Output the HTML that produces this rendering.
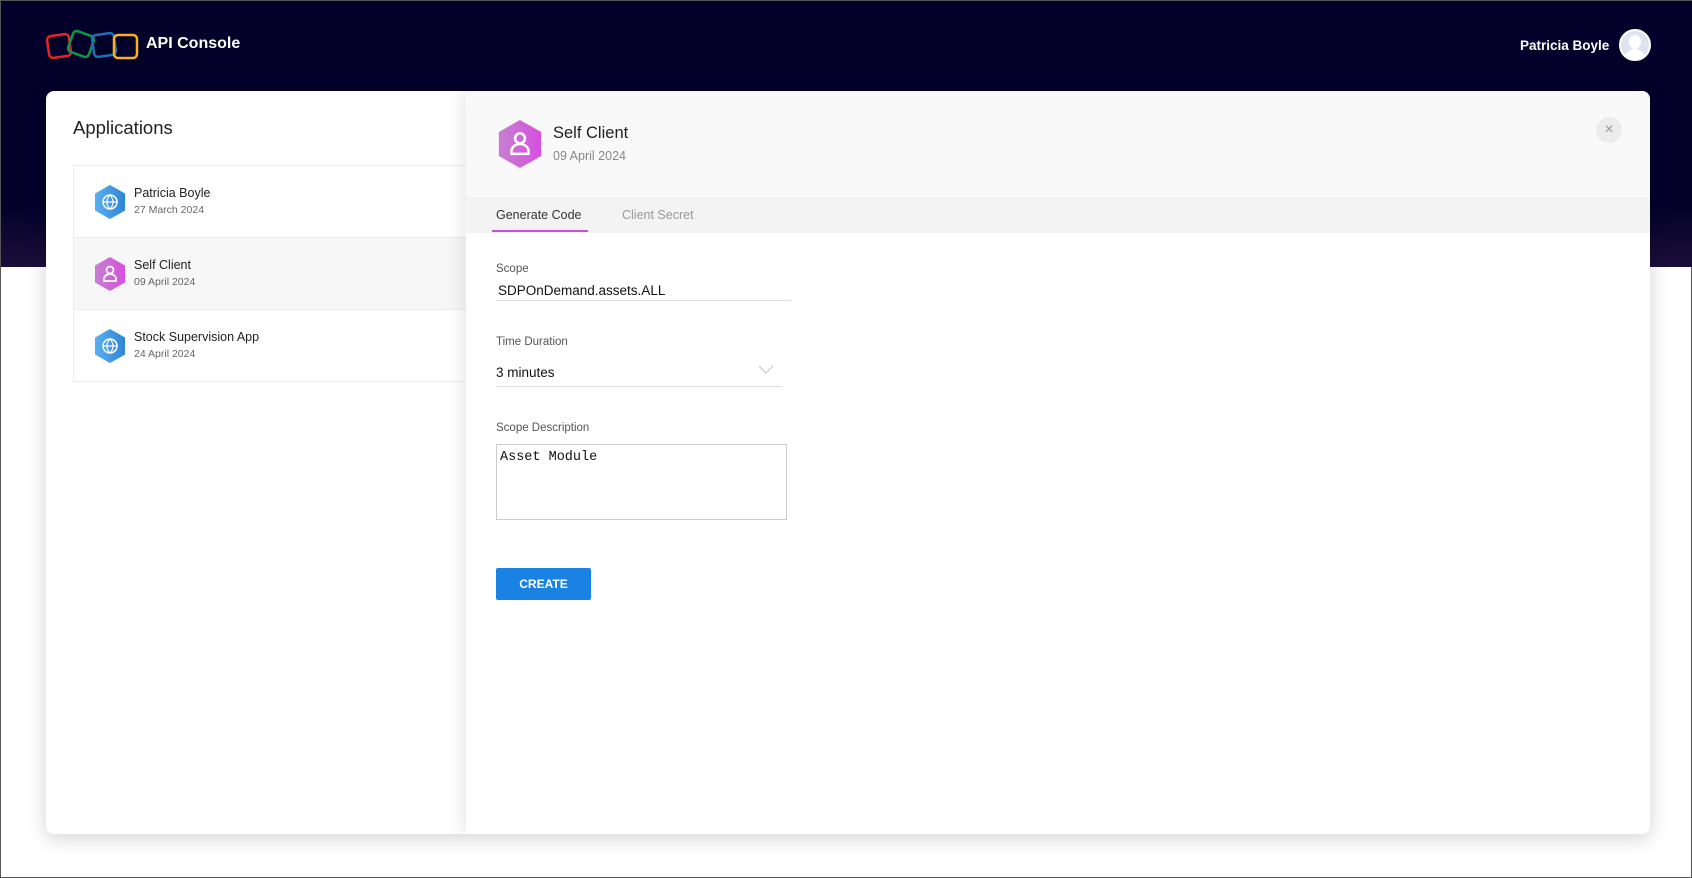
<!DOCTYPE html>
<html><head><meta charset="utf-8"><style>
*{box-sizing:border-box;margin:0;padding:0}
body{width:1692px;height:878px;background:#fff;font-family:"Liberation Sans",sans-serif;position:relative;overflow:hidden;border:1px solid #555}
.top{position:absolute;left:0;top:0;width:1692px;height:266px;background:linear-gradient(#03002a 0,#03002a 200px,#1a0f3a 266px)}
.card{position:absolute;left:45px;top:90px;width:1604px;height:743px;background:#fff;border-radius:8px;box-shadow:0 4px 20px rgba(0,0,0,.18);overflow:hidden}
.right{position:absolute;left:420px;top:0;right:0;bottom:0;background:#fff;box-shadow:-6px 0 16px rgba(0,0,0,.08)}
.abs{position:absolute}
.row{position:absolute;left:27px;width:400px;height:73px;border:1px solid #ececec;background:#fff}
.row .n{position:absolute;left:60px;top:20px;font-size:12.5px;color:#222}
.row .d{position:absolute;left:60px;top:38px;font-size:10.5px;color:#666}
.row svg{position:absolute;left:19px;top:18px}
.lbl{font-size:11.5px;color:#555}
</style></head><body>
<div class="top"></div>
<svg class="abs" style="left:44px;top:28px" width="96" height="34" viewBox="0 0 96 34">
<rect x="3" y="6" width="22" height="22" rx="4" fill="none" stroke="#e42527" stroke-width="2.5" transform="rotate(-8 14 17)"/>
<rect x="25" y="4" width="22" height="22" rx="4" fill="none" stroke="#089949" stroke-width="2.5" transform="rotate(20 36 15)"/>
<rect x="48" y="5" width="22" height="22" rx="4" fill="none" stroke="#226db4" stroke-width="2.5" transform="rotate(-8 59 16)"/>
<rect x="69" y="6" width="23" height="23" rx="4" fill="none" stroke="#f9b21d" stroke-width="2.5"/>
</svg>
<div class="abs" style="left:145px;top:34px;color:#fff;font-weight:bold;font-size:16px">API Console</div>
<div class="abs" style="left:1519px;top:37px;color:#fff;font-weight:bold;font-size:13.5px">Patricia Boyle</div>
<div class="abs" style="left:1618px;top:28px;width:32px;height:32px;border-radius:50%;background:#dfe3ee;border:2px solid #fff;overflow:hidden"><div style="position:absolute;left:8px;top:4px;width:12px;height:14px;border-radius:50%;background:#fff"></div><div style="position:absolute;left:4px;top:18px;width:20px;height:14px;border-radius:10px 10px 0 0;background:#fff"></div></div>
<div class="card">
<div class="abs" style="left:27px;top:26px;font-size:18.5px;color:#222">Applications</div>
<div class="row" style="top:74px"><svg width="34" height="36" viewBox="0 0 34 36"><defs><linearGradient id="b" x1="0" x2="1"><stop offset="0" stop-color="#5aaef0"/><stop offset="1" stop-color="#2f86d8"/></linearGradient></defs><polygon points="17,1 32,9.5 32,26.5 17,35 2,26.5 2,9.5" fill="url(#b)"/><circle cx="17" cy="18" r="7" fill="none" stroke="#fff" stroke-width="1.5"/><path d="M10 18h14M17 11c-4 4-4 10 0 14M17 11c4 4 4 10 0 14" fill="none" stroke="#fff" stroke-width="1.2"/></svg><div class="n">Patricia Boyle</div><div class="d">27 March 2024</div></div>
<div class="row" style="top:146px;background:#f7f7f7"><svg width="34" height="36" viewBox="0 0 34 36"><defs><linearGradient id="p" x1="0" x2="1"><stop offset="0" stop-color="#c77fd0"/><stop offset="1" stop-color="#d750e0"/></linearGradient></defs><polygon points="17,1 32,9.5 32,26.5 17,35 2,26.5 2,9.5" fill="url(#p)"/><circle cx="17" cy="14" r="3.5" fill="none" stroke="#fff" stroke-width="1.8"/><path d="M11 25v-2a6 5 0 0 1 12 0v2z" fill="none" stroke="#fff" stroke-width="1.8"/></svg><div class="n">Self Client</div><div class="d">09 April 2024</div></div>
<div class="row" style="top:218px"><svg width="34" height="36" viewBox="0 0 34 36"><polygon points="17,1 32,9.5 32,26.5 17,35 2,26.5 2,9.5" fill="url(#b)"/><circle cx="17" cy="18" r="7" fill="none" stroke="#fff" stroke-width="1.5"/><path d="M10 18h14M17 11c-4 4-4 10 0 14M17 11c4 4 4 10 0 14" fill="none" stroke="#fff" stroke-width="1.2"/></svg><div class="n">Stock Supervision App</div><div class="d">24 April 2024</div></div>
<div class="right">
<div class="abs" style="left:0;top:0;right:0;height:106px;background:#f9f9f9"></div>
<div class="abs" style="left:0;top:106px;right:0;height:36px;background:#f3f3f3"></div>
<svg class="abs" style="left:30px;top:27px" width="48" height="52" viewBox="0 0 34 36"><polygon points="17,1 32,9.5 32,26.5 17,35 2,26.5 2,9.5" fill="url(#p)"/><circle cx="17" cy="14" r="3.5" fill="none" stroke="#fff" stroke-width="1.8"/><path d="M11 25v-2a6 5 0 0 1 12 0v2z" fill="none" stroke="#fff" stroke-width="1.8"/></svg>
<div class="abs" style="left:87px;top:33px;font-size:16.5px;color:#222">Self Client</div>
<div class="abs" style="left:87px;top:58px;font-size:12.5px;color:#888">09 April 2024</div>
<div class="abs" style="left:1130px;top:26px;width:26px;height:26px;border-radius:50%;background:#ececec;color:#999;text-align:center;line-height:26px;font-size:16px">×</div>
<div class="abs" style="left:30px;top:117px;font-size:12.5px;color:#333">Generate Code</div>
<div class="abs" style="left:26px;top:139px;width:96px;height:2px;background:#c552d6"></div>
<div class="abs" style="left:156px;top:117px;font-size:12.5px;color:#999">Client Secret</div>
<div class="abs lbl" style="left:30px;top:172px">Scope</div>
<div class="abs" style="left:32px;top:192px;font-size:13.5px;color:#111">SDPOnDemand.assets.ALL</div>
<div class="abs" style="left:30px;top:209px;width:295px;height:1px;background:#ddd"></div>
<div class="abs lbl" style="left:30px;top:245px">Time Duration</div>
<div class="abs" style="left:30px;top:274px;font-size:13.5px;color:#111">3 minutes</div>
<svg class="abs" style="left:292px;top:274px" width="16" height="10"><path d="M1 1l7 7 7-7" fill="none" stroke="#ccc" stroke-width="1.2"/></svg>
<div class="abs" style="left:30px;top:295px;width:286px;height:1px;background:#ddd"></div>
<div class="abs lbl" style="left:30px;top:331px">Scope Description</div>
<div class="abs" style="left:30px;top:353px;width:291px;height:76px;border:1px solid #ccc;font-family:'Liberation Mono',monospace;font-size:13.5px;padding:5px 3px;color:#111">Asset Module</div>
<div class="abs" style="left:30px;top:477px;width:95px;height:32px;background:#1a82e2;border-radius:2px;color:#fff;font-weight:bold;font-size:12px;text-align:center;line-height:32px">CREATE</div>
</div>
</div>
</body></html>
